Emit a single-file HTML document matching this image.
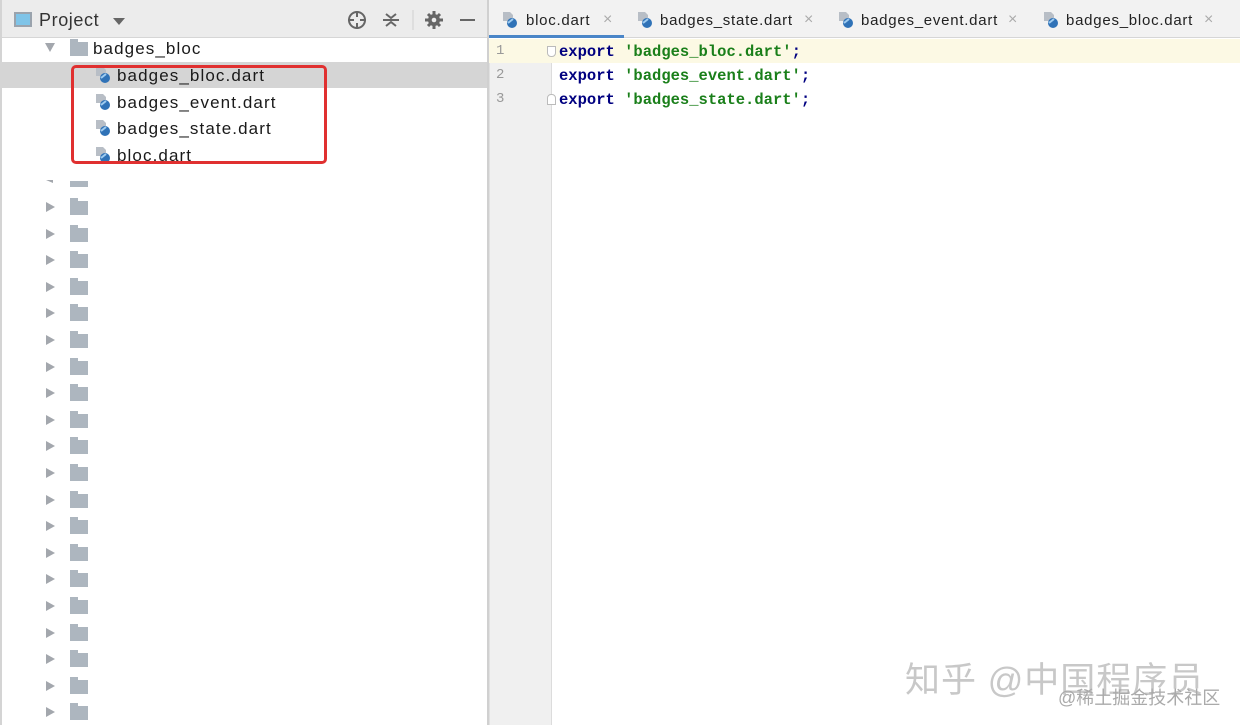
<!DOCTYPE html>
<html><head><meta charset="utf-8"><style>
*{margin:0;padding:0;box-sizing:border-box}
body{width:1240px;height:725px;overflow:hidden;background:#fff;position:relative;font-family:"Liberation Sans","Noto Sans CJK SC",sans-serif}
.a{position:absolute}
.t{font-size:17px;color:#1a1a1a;letter-spacing:1.1px}
.tri{position:absolute;width:0;height:0;border-top:5px solid transparent;border-bottom:5px solid transparent;border-left:9px solid #a3a7ad}
.fold{position:absolute;width:18px;height:14px;background:#adb6bf}
.fold:before{content:"";position:absolute;left:0;top:-3px;width:8px;height:3px;background:#adb6bf}
.tab{position:absolute;top:12px;font-size:15px;color:#222;letter-spacing:.75px}
.x{position:absolute;top:11px;color:#aaa;font-size:16px}
.code{position:absolute;left:559px;font-family:"Liberation Mono",monospace;font-size:15.5px;font-weight:bold;color:#000080}
.code span{color:#1a7f1a}
.ln{position:absolute;left:496px;font-family:"Liberation Mono",monospace;font-size:14px;color:#999}
</style></head><body>
<div class="a" style="left:0;top:0;width:488px;height:38px;background:#ececec;border-bottom:1px solid #d6d6d6"></div>
<div class="a" style="left:0;top:0;width:2px;height:725px;background:#d4d4d4"></div>
<div class="a" style="left:14px;top:12px;width:18px;height:15px;border:2px solid #9aa3ad;background:#7fc4e8"></div>
<div class="a" style="left:39px;top:10px;font-size:18px;color:#333;letter-spacing:.6px">Project</div>
<div class="a" style="left:113px;top:18px;border-left:6px solid transparent;border-right:6px solid transparent;border-top:7px solid #666"></div>
<svg class="a" style="left:345px;top:8px" width="130" height="24" viewBox="0 0 130 24">
<circle cx="12" cy="12" r="8" fill="none" stroke="#666" stroke-width="2"/><path d="M12 3v6M12 15v6M3 12h6M15 12h6" stroke="#666" stroke-width="2"/>
<path d="M38 12h16M41 6l5 4 5-4M41 18l5-4 5 4" stroke="#666" stroke-width="2" fill="none"/>
<line x1="68" y1="2" x2="68" y2="22" stroke="#d0d0d0"/>
<path d="M89 3v18M80 12h18M83 6l12 12M95 6l-12 12" stroke="#666" stroke-width="3"/><circle cx="89" cy="12" r="6" fill="#666"/><circle cx="89" cy="12" r="2.3" fill="#ececec"/>
<path d="M115 12h16" stroke="#666" stroke-width="2"/>
</svg>
<div class="tri" style="left:45px;top:43px;border-left:5px solid transparent;border-right:5px solid transparent;border-top:9px solid #a3a7ad;border-bottom:0"></div>
<div class="fold" style="left:70px;top:42px"></div>
<div class="a t" style="left:93px;top:39px">badges_bloc</div>
<div class="a" style="left:0;top:62px;width:487px;height:26px;background:#d5d5d5"></div>
<div id="files"></div>
<div class="a" style="left:71px;top:65px;width:256px;height:99px;border:3px solid #e03030;border-radius:5px"></div>
<div id="folders"></div>
<div class="a" style="left:487px;top:0;width:2px;height:725px;background:#d0d0d0"></div>
<div class="a" style="left:489px;top:0;width:751px;height:38px;background:#f2f2f2;border-bottom:1px solid #d6d6d6"></div>
<div class="a" style="left:489px;top:35px;width:135px;height:3px;background:#4a86c8"></div>
<div id="tabs"></div>
<div class="a" style="left:489px;top:39px;width:63px;height:686px;background:#f0f0f0;border-left:1px solid #e0e0e0;border-right:1px solid #dcdcdc"></div>
<div class="a" style="left:489px;top:39px;width:751px;height:24px;background:#fcf9e4"></div>
<div class="ln" style="top:43px">1</div><div class="ln" style="top:67px">2</div><div class="ln" style="top:91px">3</div>
<div class="a" style="left:547px;top:46px;width:9px;height:11px;border:1px solid #bbb;border-radius:0 0 4px 4px;background:#fff"></div>
<div class="a" style="left:547px;top:94px;width:9px;height:11px;border:1px solid #bbb;border-radius:4px 4px 0 0;background:#fff"></div>
<div class="code" style="top:43px">export <span>'badges_bloc.dart'</span>;</div>
<div class="code" style="top:67px">export <span>'badges_event.dart'</span>;</div>
<div class="code" style="top:91px">export <span>'badges_state.dart'</span>;</div>
<div class="a" style="left:905px;top:652px;font-size:35px;color:#c8c8c8;letter-spacing:1px">知乎 @中国程序员</div>
<div class="a" style="left:1058px;top:684px;font-size:18px;color:#aaa">@稀土掘金技术社区</div>
<script>
var ic='<svg width="16" height="18" viewBox="0 0 16 18"><path d="M1 1h7l3 3v6H1z" fill="#b8bec6"/><circle cx="10" cy="12" r="5" fill="#2f72b7"/><path d="M6 12l5-4" stroke="#9ecbf0" stroke-width="2"/></svg>';
var f=['badges_bloc.dart','badges_event.dart','badges_state.dart','bloc.dart'],h='';
f.forEach(function(n,i){var y=65+i*26.5;h+='<div class="a" style="left:95px;top:'+(y+1)+'px">'+ic+'</div><div class="a t" style="left:117px;top:'+(y+1)+'px">'+n+'</div>';});
document.getElementById('files').innerHTML=h;
h='<div class="a" style="left:70px;top:181px;width:18px;height:6px;background:#adb6bf"></div><div class="a" style="left:46px;top:180px;border-top:3px solid #a3a7ad;border-left:7px solid transparent"></div>';
for(var k=0;k<20;k++){var c=207+26.6*k;h+='<div class="tri" style="left:46px;top:'+(c-5)+'px"></div><div class="fold" style="left:70px;top:'+(c-6)+'px"></div>';}
document.getElementById('folders').innerHTML=h;
var t=[[502,526,'bloc.dart',603],[637,660,'badges_state.dart',804],[838,861,'badges_event.dart',1008],[1043,1066,'badges_bloc.dart',1204]];h='';
t.forEach(function(a){h+='<div class="a" style="left:'+a[0]+'px;top:11px">'+ic+'</div><div class="tab" style="left:'+a[1]+'px">'+a[2]+'</div><div class="x" style="left:'+a[3]+'px">×</div>';});
document.getElementById('tabs').innerHTML=h;
</script>
</body></html>
